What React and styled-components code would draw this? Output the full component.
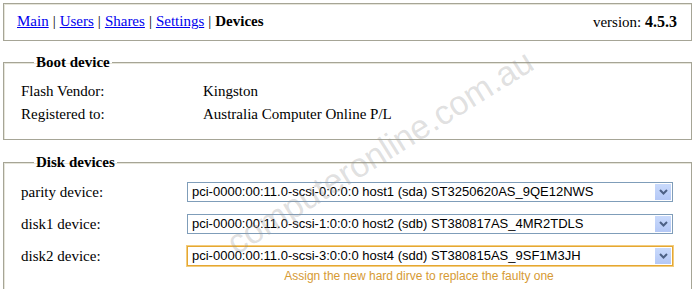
import React from "react";
import styled, { createGlobalStyle } from "styled-components";

const Global = createGlobalStyle`
  html, body { margin: 0; padding: 0; background: #fff; }
  body { font-family: "Liberation Serif", "Times New Roman", serif; color: #000; }
`;

const Page = styled.div`
  position: relative;
  width: 696px;
  height: 289px;
  overflow: hidden;
  padding: 3px 4px 0 3px;
  box-sizing: border-box;
  display: flex;
  flex-direction: column;
  gap: 13px;
`;

const TopBar = styled.div`
  flex: none;
  height: 38px;
  box-sizing: border-box;
  border: 1px solid #a6a596;
  box-shadow: inset 1px 1px 0 #e6e5da;
  display: flex;
  align-items: center;
  justify-content: space-between;
  padding: 0 14px 1px 13px;
  font-size: 15px;
`;

const Nav = styled.div`
  display: flex;
  gap: 4px;
  align-items: baseline;
`;

const NavLink = styled.a`
  color: #0000ee;
  text-decoration: underline;
`;

const Current = styled.b`
  font-weight: bold;
`;

const Version = styled.div`
  b { font-size: 16px; }
`;

const Fieldset = styled.fieldset`
  flex: none;
  margin: ${(p) => p.$mt || 0}px 0 0 0;
  border: 1px solid #a6a596;
  box-shadow: inset 1px 1px 0 #e6e5da;
  padding: ${(p) => p.$pad};
  box-sizing: border-box;
`;

const Legend = styled.legend`
  font-weight: bold;
  font-size: 15px;
  line-height: 17px;
  padding: 0 2px;
  margin-left: 13px;
`;

const InfoGrid = styled.div`
  display: grid;
  grid-template-columns: 182px 1fr;
  row-gap: 6px;
  font-size: 15px;
  line-height: 17px;
`;

const DiskGrid = styled.div`
  display: grid;
  grid-template-columns: 166px 486px;
  row-gap: 12px;
  align-items: center;
  font-size: 15px;
  line-height: 17px;
`;

const Label = styled.div``;

const Select = styled.div`
  height: 20px;
  box-sizing: border-box;
  border: 1px solid ${(p) => (p.$focus ? "#e5a733" : "#7f9db9")};
  box-shadow: ${(p) => (p.$focus ? "0 0 0 1px #f3cd7e" : "none")};
  display: flex;
  align-items: center;
  justify-content: space-between;
  padding: 0 1px 0 4px;
  font-family: "Liberation Sans", Arial, sans-serif;
  font-size: 13px;
  line-height: 16px;
  background: #fff;
`;

const Arrow = styled.div`
  width: 16px;
  height: 16px;
  background: linear-gradient(#c9dafc, #b4c8f6);
  display: flex;
  align-items: center;
  justify-content: center;
`;

const Hint = styled.div`
  grid-column: 2;
  text-align: center;
  color: #d69a33;
  font-family: "Liberation Sans", Arial, sans-serif;
  font-size: 12px;
  line-height: 14px;
  margin-top: -9px;
  padding-right: 22px;
`;

const Watermark = styled.div`
  position: absolute;
  left: 380px;
  top: 152px;
  font-family: "Liberation Sans", Arial, sans-serif;
  font-size: 34px;
  color: rgba(150, 150, 150, 0.3);
  transform: translate(-50%, -50%) rotate(-32deg);
  white-space: nowrap;
  pointer-events: none;
`;

const Chevron = () => (
  <svg width="9" height="6" viewBox="0 0 9 6">
    <path d="M1 1 L4.5 4.5 L8 1" fill="none" stroke="#4d6185" strokeWidth="2" />
  </svg>
);

const disks = [
  { label: "parity device:", value: "pci-0000:00:11.0-scsi-0:0:0:0 host1 (sda) ST3250620AS_9QE12NWS" },
  { label: "disk1 device:", value: "pci-0000:00:11.0-scsi-1:0:0:0 host2 (sdb) ST380817AS_4MR2TDLS" },
  { label: "disk2 device:", value: "pci-0000:00:11.0-scsi-3:0:0:0 host4 (sdd) ST380815AS_9SF1M3JH", focus: true },
];

export default function App() {
  return (
    <>
      <Global />
      <Page>
        <TopBar>
          <Nav>
            <NavLink href="#">Main</NavLink>|<NavLink href="#">Users</NavLink>|
            <NavLink href="#">Shares</NavLink>|<NavLink href="#">Settings</NavLink>|
            <Current>Devices</Current>
          </Nav>
          <Version>
            version: <b>4.5.3</b>
          </Version>
        </TopBar>
        <Fieldset $pad="12px 16px 16px 17px">
          <Legend>Boot device</Legend>
          <InfoGrid>
            <Label>Flash Vendor:</Label>
            <div>Kingston</div>
            <Label>Registered to:</Label>
            <div>Australia Computer Online P/L</div>
          </InfoGrid>
        </Fieldset>
        <Fieldset $pad="11px 16px 20px 17px" $mt={1}>
          <Legend>Disk devices</Legend>
          <DiskGrid>
            {disks.map((d) => (
              <React.Fragment key={d.label}>
                <Label>{d.label}</Label>
                <Select $focus={d.focus}>
                  <span>{d.value}</span>
                  <Arrow>
                    <Chevron />
                  </Arrow>
                </Select>
              </React.Fragment>
            ))}
            <Hint>Assign the new hard dirve to replace the faulty one</Hint>
          </DiskGrid>
        </Fieldset>
        <Watermark>computeronline.com.au</Watermark>
      </Page>
    </>
  );
}
